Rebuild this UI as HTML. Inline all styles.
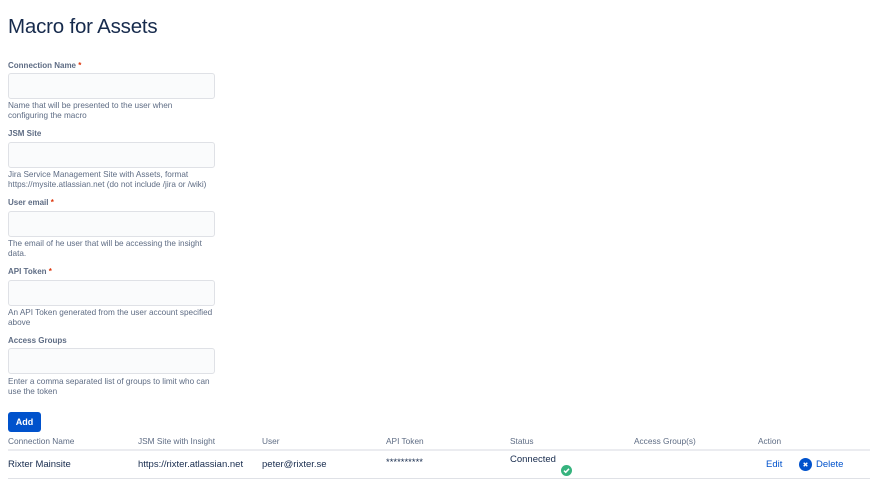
<!DOCTYPE html>
<html><head><style>
body{margin:0;width:870px;height:495px;background:#fff;font-family:"Liberation Sans",sans-serif;color:#172b4d;position:relative;overflow:hidden}
.a{position:absolute;white-space:nowrap}
h1{position:absolute;left:8px;top:15px;margin:0;font-size:20.5px;font-weight:400;color:#172b4d;letter-spacing:-0.2px}
.lbl{font-size:8px;font-weight:bold;color:#5e6c84}
.lbl b{color:#de350b}
.inp{position:absolute;left:8px;width:205px;height:24px;background:#fafbfc;border:1px solid #dfe1e6;border-radius:3px}
.help{font-size:8.2px;color:#5e6c84;line-height:10px}
.th{font-size:8.3px;color:#5e6c84;top:436px}
.td{font-size:9.5px;color:#172b4d;top:459px}
</style></head><body>
<h1>Macro for Assets</h1>

<div class="a lbl" style="left:8px;top:61px">Connection Name <b>*</b></div>
<div class="inp" style="top:73px"></div>
<div class="a help" style="left:8px;top:101px">Name that will be presented to the user when<br>configuring the macro</div>

<div class="a lbl" style="left:8px;top:129px">JSM Site</div>
<div class="inp" style="top:142px"></div>
<div class="a help" style="left:8px;top:170px">Jira Service Management Site with Assets, format<br>https://mysite.atlassian.net (do not include /jira or /wiki)</div>

<div class="a lbl" style="left:8px;top:198px">User email <b>*</b></div>
<div class="inp" style="top:211px"></div>
<div class="a help" style="left:8px;top:239px">The email of he user that will be accessing the insight<br>data.</div>

<div class="a lbl" style="left:8px;top:267px">API Token <b>*</b></div>
<div class="inp" style="top:280px"></div>
<div class="a help" style="left:8px;top:308px">An API Token generated from the user account specified<br>above</div>

<div class="a lbl" style="left:8px;top:336px">Access Groups</div>
<div class="inp" style="top:348px"></div>
<div class="a help" style="left:8px;top:377px">Enter a comma separated list of groups to limit who can<br>use the token</div>

<div class="a" style="left:8px;top:412px;width:33px;height:20px;background:#0052cc;border-radius:3px;color:#fff;font-size:9px;font-weight:bold;text-align:center;line-height:20px">Add</div>

<div class="a th" style="left:8px">Connection Name</div>
<div class="a th" style="left:138px">JSM Site with Insight</div>
<div class="a th" style="left:262px">User</div>
<div class="a th" style="left:386px">API Token</div>
<div class="a th" style="left:510px">Status</div>
<div class="a th" style="left:634px">Access Group(s)</div>
<div class="a th" style="left:758px">Action</div>
<div class="a" style="left:8px;top:449px;width:862px;height:2px;background:#ebecf0"></div>

<div class="a td" style="left:8px">Rixter Mainsite</div>
<div class="a td" style="left:138px">https://rixter.atlassian.net</div>
<div class="a td" style="left:262px">peter@rixter.se</div>
<div class="a td" style="left:386px;top:457px">**********</div>
<div class="a td" style="left:510px;top:454px">Connected</div>
<svg class="a" style="left:561px;top:465px" width="11" height="11" viewBox="0 0 11 11"><circle cx="5.5" cy="5.5" r="5.5" fill="#36b37e"/><path d="M3 5.6l1.7 1.7 3.3-3.5" stroke="#fff" stroke-width="1.5" fill="none"/></svg>
<div class="a td" style="left:766px;color:#0052cc">Edit</div>
<svg class="a" style="left:799px;top:458px" width="13" height="13" viewBox="0 0 13 13"><circle cx="6.5" cy="6.5" r="6.5" fill="#0052cc"/><path d="M4.7 4.7l3.6 3.6M8.3 4.7l-3.6 3.6" stroke="#fff" stroke-width="1.4"/></svg>
<div class="a td" style="left:816px;color:#0052cc">Delete</div>
<div class="a" style="left:8px;top:478px;width:862px;height:1px;background:#dfe1e6"></div>
</body></html>
